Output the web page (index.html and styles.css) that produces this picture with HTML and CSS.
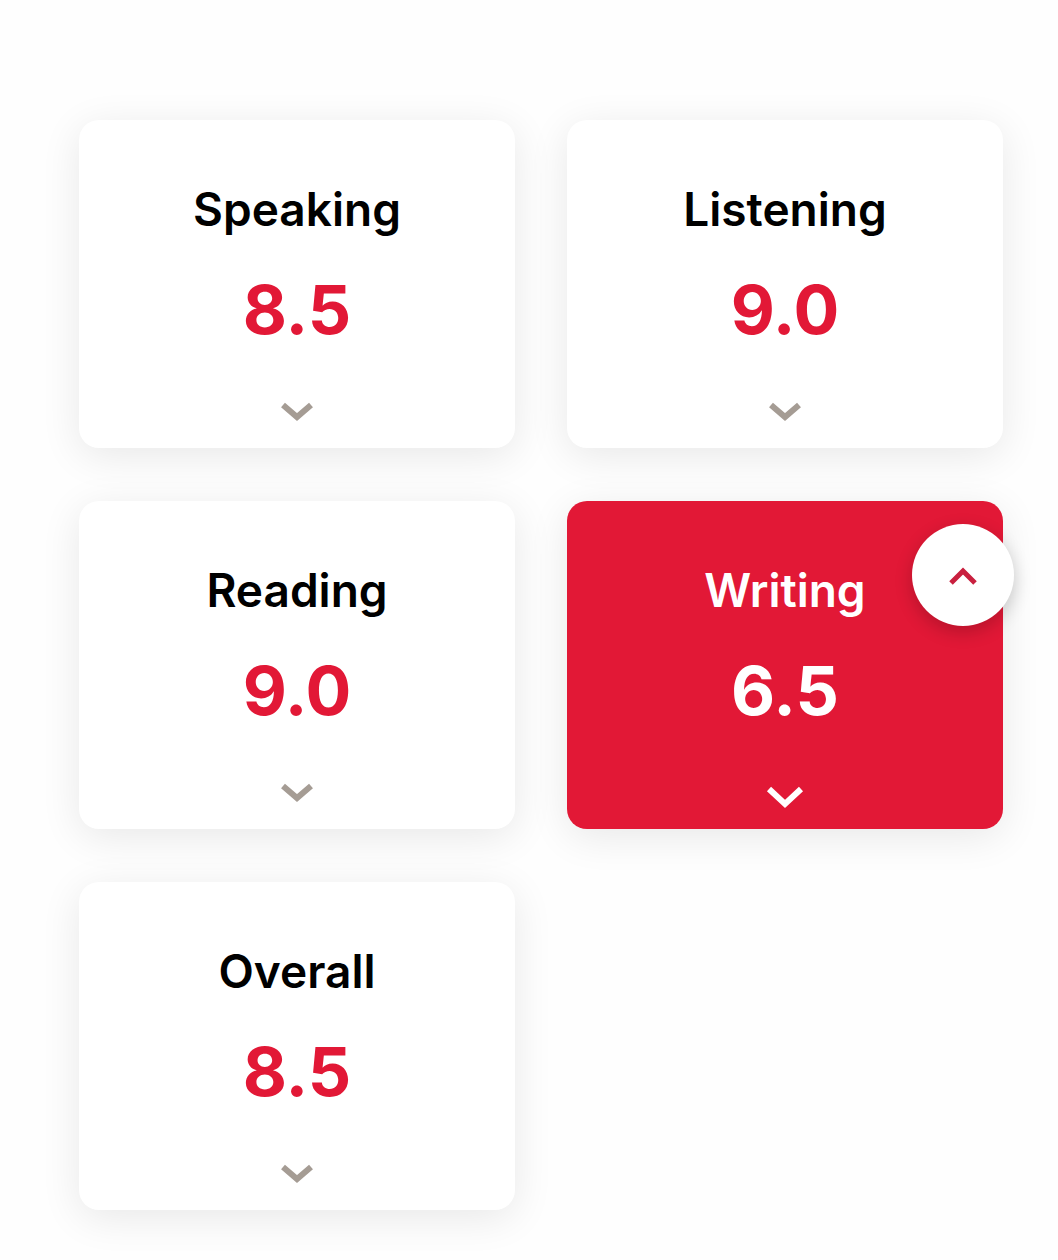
FILE: index.html
```
<!DOCTYPE html>
<html lang="en">
<head>
    <meta charset="UTF-8">
    <meta name="viewport" content="width=device-width, initial-scale=1.0">
    <title>Test Scores</title>
    <link rel="stylesheet" href="styles.css">
</head>
<body>
    <main class="scores">
        <button class="score-card" type="button">
            <span class="skill">Speaking</span>
            <span class="score">8.5</span>
            <svg class="chevron" viewBox="0 0 32 20" aria-hidden="true"><path d="M2 3L16 15L30 3"/></svg>
        </button>

        <button class="score-card" type="button">
            <span class="skill">Listening</span>
            <span class="score">9.0</span>
            <svg class="chevron" viewBox="0 0 32 20" aria-hidden="true"><path d="M2 3L16 15L30 3"/></svg>
        </button>

        <button class="score-card" type="button">
            <span class="skill">Reading</span>
            <span class="score">9.0</span>
            <svg class="chevron" viewBox="0 0 32 20" aria-hidden="true"><path d="M2 3L16 15L30 3"/></svg>
        </button>

        <button class="score-card active" type="button">
            <span class="skill">Writing</span>
            <span class="score">6.5</span>
            <svg class="chevron" viewBox="0 0 38 24" aria-hidden="true"><path d="M3 4L19 19L35 4"/></svg>
        </button>

        <button class="score-card" type="button">
            <span class="skill">Overall</span>
            <span class="score">8.5</span>
            <svg class="chevron" viewBox="0 0 32 20" aria-hidden="true"><path d="M2 3L16 15L30 3"/></svg>
        </button>
    </main>

    <button class="back-to-top" type="button" aria-label="Back to top">
        <svg viewBox="0 0 30 20" aria-hidden="true"><path d="M3 18L15 6L27 18"/></svg>
    </button>
</body>
</html>
```

FILE: styles.css
```
:root {
    --primary-color: #e21836;
    --icon-color: #c9203f;
    --chevron-color: #a59c94;
    --white-color: #ffffff;
}

* {
    box-sizing: border-box;
}

body {
    margin: 0;
    background-color: #fefefe;
    font-family: Inter, "Liberation Sans", sans-serif;
}

.scores {
    display: grid;
    grid-template-columns: 1fr 1fr;
    gap: 53px 52px;
    padding: 120px 55px 50px 79px;
}

.score-card {
    display: flex;
    flex-direction: column;
    align-items: center;
    min-height: 328px;
    padding: 59px 24px 20px;
    border: none;
    border-radius: 20px;
    background-color: var(--white-color);
    box-shadow: 0 8px 40px rgba(0, 0, 0, 0.09);
    color: #000000;
    font-family: inherit;
    cursor: pointer;
}

.skill {
    font-size: 46px;
    font-weight: 600;
    line-height: 60px;
}

.score {
    margin-top: 25px;
    color: var(--primary-color);
    font-size: 68px;
    font-weight: 700;
    line-height: 90px;
}

.chevron {
    width: 32px;
    height: 20px;
    margin-top: 48px;
    fill: none;
    stroke: var(--chevron-color);
    stroke-width: 6;
}

.active {
    background-color: var(--primary-color);
    color: var(--white-color);
}

.active .score {
    color: var(--white-color);
}

.active .chevron {
    width: 38px;
    height: 24px;
    margin-top: 50px;
    stroke: var(--white-color);
}

/* Floats over the cards at the right edge */
.back-to-top {
    position: fixed;
    top: 524px;
    right: 44px;
    display: flex;
    align-items: center;
    justify-content: center;
    width: 102px;
    height: 102px;
    padding: 0;
    border: none;
    border-radius: 50%;
    background-color: var(--white-color);
    box-shadow: 0 6px 18px rgba(0, 0, 0, 0.2);
    cursor: pointer;
}

.back-to-top svg {
    width: 30px;
    height: 20px;
    fill: none;
    stroke: var(--icon-color);
    stroke-width: 5;
}
```
